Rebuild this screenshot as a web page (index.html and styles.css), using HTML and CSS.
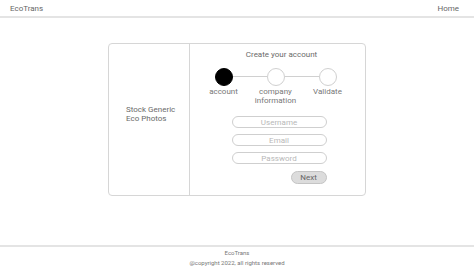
FILE: index.html
```html
<!DOCTYPE html>
<html lang="en">
<head>
	<meta charset="UTF-8">
	<title>EcoTrans</title>
	<link rel="stylesheet" href="styles.css">
</head>
<body>
	<header class="topbar">
		<span class="brand">EcoTrans</span>
		<a class="nav-link" href="#">Home</a>
	</header>
	<main class="page">
		<section class="card">
			<div class="photo-side">
				<p>Stock Generic<br>Eco Photos</p>
			</div>
			<div class="form-side">
				<h1 class="title">Create your account</h1>
				<div class="stepper">
					<div class="step done">
						<span class="dot"></span>
						<span class="label">account</span>
					</div>
					<div class="step">
						<span class="dot"></span>
						<span class="label">company<br>information</span>
					</div>
					<div class="step">
						<span class="dot"></span>
						<span class="label">Validate</span>
					</div>
				</div>
				<form class="fields">
					<input class="field" type="text" placeholder="Username">
					<input class="field" type="email" placeholder="Email">
					<input class="field" type="password" placeholder="Password">
					<div class="actions">
						<button class="next" type="button">Next</button>
					</div>
				</form>
			</div>
		</section>
	</main>
	<footer class="footer">
		<span>EcoTrans</span>
		<span>@copyright 2022, all rights reserved</span>
	</footer>
</body>
</html>
```

FILE: styles.css
```css
html, body {
	height: 100%;
}
body {
	margin: 0;
	display: flex;
	flex-direction: column;
	font-family: Roboto, "Liberation Sans", sans-serif;
	color: #777;
	background: #fff;
}
.topbar {
	display: flex;
	justify-content: space-between;
	align-items: center;
	height: 16px;
	padding: 0 15px 0 10px;
	border-bottom: 2px solid #e4e4e4;
	font-size: 8px;
	color: #666;
}
.nav-link {
	color: #666;
	text-decoration: none;
}
.page {
	display: flex;
	justify-content: center;
	padding-top: 25px;
}
.card {
	display: flex;
	width: 256px;
	height: 151px;
	border: 1px solid #d6d6d6;
	border-radius: 4px;
}
.photo-side {
	width: 81px;
	padding: 61px 0 0 17px;
	box-sizing: border-box;
	border-right: 1px solid #d6d6d6;
	font-size: 8px;
	color: #6a6a6a;
}
.photo-side p {
	margin: 0;
	line-height: 9px;
}
.form-side {
	flex: 1;
	display: flex;
	flex-direction: column;
	align-items: center;
}
.title {
	margin: 6px 0 0;
	font-size: 8px;
	font-weight: 400;
	line-height: 10px;
	color: #6a6a6a;
	padding-left: 8px;
}
.stepper {
	display: flex;
	margin-top: 8px;
	margin-right: 4px;
}
.step {
	position: relative;
	width: 52px;
	display: flex;
	flex-direction: column;
	align-items: center;
}
.step + .step::before {
	content: '';
	position: absolute;
	left: -17px;
	top: 8px;
	width: 34px;
	height: 1px;
	background: #d0d0d0;
}
.dot {
	width: 16px;
	height: 16px;
	border: 1px solid #d0d0d0;
	border-radius: 50%;
	background: #fff;
}
.step.done .dot {
	background: #000;
	border-color: #000;
}
.label {
	margin-top: 2px;
	font-size: 8px;
	line-height: 8.5px;
	text-align: center;
	color: #777;
	white-space: nowrap;
}
.fields {
	display: flex;
	flex-direction: column;
	gap: 6px;
	margin-top: 11px;
	margin-left: 3px;
}
.field {
	width: 95px;
	height: 12px;
	box-sizing: border-box;
	padding: 0;
	border: 1px solid #cfcfcf;
	border-radius: 7px;
	font-family: inherit;
	font-size: 8px;
	text-align: center;
	color: #555;
	outline: none;
}
.field::placeholder {
	color: #b8b8b8;
}
.actions {
	display: flex;
	justify-content: flex-end;
	margin-top: 1px;
}
.next {
	width: 36px;
	height: 13px;
	padding: 0;
	border: 1px solid #c4c4c4;
	border-radius: 7px;
	background: #dcdcdc;
	font-family: inherit;
	font-size: 8px;
	color: #666;
}
.footer {
	margin-top: auto;
	display: flex;
	flex-direction: column;
	align-items: center;
	gap: 3px;
	padding: 2px 0 4px;
	border-top: 2px solid #e4e4e4;
	font-size: 6px;
	color: #777;
}
```
